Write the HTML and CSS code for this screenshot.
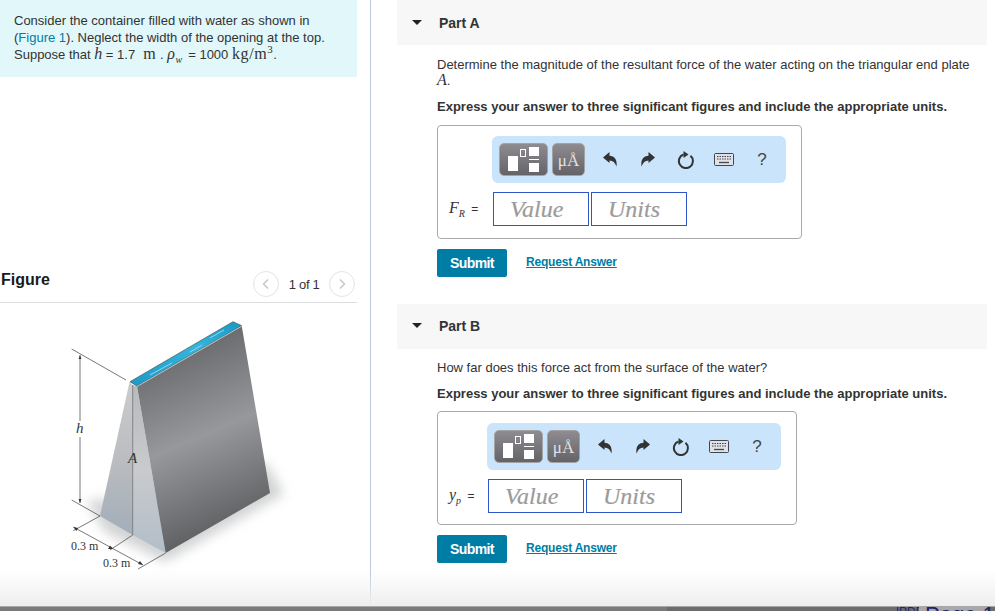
FILE: index.html
```html
<!DOCTYPE html>
<html lang="en">
<head>
    <meta charset="UTF-8">
    <meta name="viewport" content="width=device-width, initial-scale=1.0">
    <title>Part A - Water Container</title>
    <link rel="stylesheet" href="styles.css">
</head>
<body>
    <div class="page">
        <!-- Left column -->
        <aside class="left-col">
            <div class="intro">
                Consider the container filled with water as shown in
                (<a class="fig-link" href="#">Figure 1</a>). Neglect the width of the opening at the top.
                Suppose that <i class="math big">h</i> = 1.7 <span class="unit">&nbsp;m</span> . <i class="math big rho">ρ<sub>w</sub></i> = 1000 <span class="unit">kg/m<sup>3</sup></span>.
            </div>

            <div class="figure-head">
                <h2>Figure</h2>
                <div class="pager">
                    <span class="circle-btn">
                        <svg width="10" height="12" viewBox="0 0 10 12"><path d="M7 1.500 2.500 6 7 10.500" fill="none" stroke="#c4c4c4" stroke-width="1.400"/></svg>
                    </span>
                    <span class="pager-text">1 of 1</span>
                    <span class="circle-btn">
                        <svg width="10" height="12" viewBox="0 0 10 12"><path d="M3 1.500 7.500 6 3 10.500" fill="none" stroke="#c4c4c4" stroke-width="1.400"/></svg>
                    </span>
                </div>
            </div>

            <svg class="figure" width="357" height="303" viewBox="0 303 357 303">
                <defs>
                    <linearGradient id="bigFace" x1="0.3" y1="0" x2="0.55" y2="1">
                        <stop offset="0" stop-color="#5e5f61"/>
                        <stop offset="0.5" stop-color="#97989b"/>
                        <stop offset="1" stop-color="#565759"/>
                    </linearGradient>
                    <linearGradient id="leftHalf" x1="0" y1="0" x2="0" y2="1">
                        <stop offset="0" stop-color="#cbcccd"/>
                        <stop offset="0.55" stop-color="#b9bbbe"/>
                        <stop offset="1" stop-color="#a1aeba"/>
                    </linearGradient>
                    <linearGradient id="rightHalf" x1="0" y1="0" x2="0" y2="1">
                        <stop offset="0" stop-color="#b8babd"/>
                        <stop offset="0.5" stop-color="#c9cacc"/>
                        <stop offset="1" stop-color="#b2bec9"/>
                    </linearGradient>
                    <linearGradient id="water" x1="0" y1="1" x2="1" y2="0">
                        <stop offset="0" stop-color="#1a9cc8"/>
                        <stop offset="0.6" stop-color="#36b4dc"/>
                        <stop offset="1" stop-color="#159ac6"/>
                    </linearGradient>
                    <filter id="soft" x="-20%" y="-20%" width="140%" height="140%">
                        <feGaussianBlur stdDeviation="6"/>
                    </filter>
                </defs>

                <!-- ground shadow -->
                <polygon points="86,500 105,532 165,562 284,494 266,462 150,500" fill="#d2d3d4" filter="url(#soft)"/>

                <!-- container faces -->
                <polygon points="129.500,382 100,516 132.700,535 132.700,385" fill="url(#leftHalf)"/>
                <polygon points="132.700,385 132.700,535 165.700,553 137,386" fill="url(#rightHalf)"/>
                <polygon points="137,386 241.700,325.700 270,493 165.700,553" fill="url(#bigFace)"/>
                <polygon points="130,381.700 233,321.700 241.700,325.700 137,386" fill="url(#water)" stroke="#3b3d40" stroke-width="0.600"/>
                <path d="M150 375l22-12M190 352l12-7M210 338l14-8" stroke="#8fd8ef" stroke-width="1" fill="none"/>
                <line x1="137" y1="386.500" x2="241.700" y2="326.200" stroke="#d8dadb" stroke-width="0.800"/>
                <line x1="132.700" y1="385" x2="132.700" y2="535" stroke="#77797c" stroke-width="0.900"/>

                <!-- dimension lines -->
                <g class="dim">
                    <line x1="80" y1="355" x2="80" y2="421"/>
                    <line x1="80" y1="437" x2="80" y2="503"/>
                    <line x1="71.700" y1="349" x2="126" y2="380"/>
                    <line x1="71.700" y1="500" x2="100" y2="516"/>
                    <line x1="73.300" y1="530.700" x2="100" y2="516"/>
                    <line x1="73.300" y1="527" x2="143" y2="565"/>
                    <line x1="132.700" y1="535" x2="110" y2="550"/>
                    <line x1="165.700" y1="553" x2="138" y2="569"/>
                </g>
                <polygon points="80,355 78.600,359 81.400,359" fill="#333"/>
                <polygon points="80,503 78.600,499 81.400,499" fill="#333"/>
                <polygon points="73.300,527 78,528 76.400,531" fill="#333"/>
                <polygon points="113,549 108,549 110,545.500" fill="#333"/>
                <polygon points="143,565 138,564 140,561" fill="#333"/>

                <text class="fig-label italic" x="76" y="433">h</text>
                <text class="fig-label italic" x="128" y="463">A</text>
                <text class="fig-label" x="71" y="550">0.3 m</text>
                <text class="fig-label" x="103" y="567">0.3 m</text>
            </svg>
        </aside>

        <!-- Right column -->
        <main class="right-col">
            <section class="part part-a">
                <div class="part-head">
                    <span class="caret"></span>
                    <span class="part-title">Part A</span>
                </div>
                <p class="question">Determine the magnitude of the resultant force of the water acting on the triangular end plate <i class="math big">A</i>.</p>
                <p class="hint">Express your answer to three significant figures and include the appropriate units.</p>

                <div class="answer-box">
                    <div class="toolbar">
                        <span class="tool-btn frac-btn">
                            <svg width="31" height="25" viewBox="0 0 31 25">
                                <rect x="0" y="9" width="10" height="15" fill="#fff"/>
                                <rect x="12.500" y="2.500" width="5" height="7" fill="none" stroke="#fff"/>
                                <rect x="21" y="0" width="10" height="9" fill="#fff"/>
                                <rect x="21" y="12" width="10" height="1" fill="#fff"/>
                                <rect x="21" y="16" width="10" height="9" fill="#fff"/>
                            </svg>
                        </span>
                        <span class="tool-btn unit-btn">μÅ</span>
                        <span class="tool"><svg width="14" height="15" viewBox="0 0 14 15"><path d="M0 5.500 6.500 0v3.800C11 4 14.500 7 13.500 14.500 12 10.500 10 8.500 6.500 8.500V11z" fill="#333"/></svg></span>
                        <span class="tool"><svg width="14" height="15" viewBox="0 0 14 15"><path d="M14 5.500 7.500 0v3.800C3 4-.5 7 .5 14.500 2 10.500 4 8.500 7.500 8.500V11z" fill="#333"/></svg></span>
                        <span class="tool"><svg width="18" height="18" viewBox="0 0 18 18"><path d="M13.500 4.800A7 7 0 1 1 6.500 3.500" fill="none" stroke="#333" stroke-width="2"/><path d="M6.500 0v7l5-3.500z" fill="#333"/></svg></span>
                        <span class="tool"><svg width="20" height="13" viewBox="0 0 20 13"><rect x="0.500" y="0.500" width="19" height="12" rx="1" fill="#dfe3e6" stroke="#445"/><path d="M3 3.500h14M3 6h14" stroke="#445" stroke-dasharray="1.500 1"/><path d="M5 9.500h10" stroke="#445" stroke-width="1.300"/></svg></span>
                        <span class="tool help">?</span>
                    </div>
                    <div class="answer-row">
                        <span class="answer-label"><i class="math">F<sub>R</sub></i> =</span>
                        <span class="field">Value</span>
                        <span class="field">Units</span>
                    </div>
                </div>

                <div class="actions">
                    <button class="submit-btn" type="button">Submit</button>
                    <a class="request-link" href="#">Request Answer</a>
                </div>
            </section>

            <section class="part part-b">
                <div class="part-head">
                    <span class="caret"></span>
                    <span class="part-title">Part B</span>
                </div>
                <p class="question">How far does this force act from the surface of the water?</p>
                <p class="hint">Express your answer to three significant figures and include the appropriate units.</p>

                <div class="answer-box">
                    <div class="toolbar">
                        <span class="tool-btn frac-btn">
                            <svg width="31" height="25" viewBox="0 0 31 25">
                                <rect x="0" y="9" width="10" height="15" fill="#fff"/>
                                <rect x="12.500" y="2.500" width="5" height="7" fill="none" stroke="#fff"/>
                                <rect x="21" y="0" width="10" height="9" fill="#fff"/>
                                <rect x="21" y="12" width="10" height="1" fill="#fff"/>
                                <rect x="21" y="16" width="10" height="9" fill="#fff"/>
                            </svg>
                        </span>
                        <span class="tool-btn unit-btn">μÅ</span>
                        <span class="tool"><svg width="14" height="15" viewBox="0 0 14 15"><path d="M0 5.500 6.500 0v3.800C11 4 14.500 7 13.500 14.500 12 10.500 10 8.500 6.500 8.500V11z" fill="#333"/></svg></span>
                        <span class="tool"><svg width="14" height="15" viewBox="0 0 14 15"><path d="M14 5.500 7.500 0v3.800C3 4-.5 7 .5 14.500 2 10.500 4 8.500 7.500 8.500V11z" fill="#333"/></svg></span>
                        <span class="tool"><svg width="18" height="18" viewBox="0 0 18 18"><path d="M13.500 4.800A7 7 0 1 1 6.500 3.500" fill="none" stroke="#333" stroke-width="2"/><path d="M6.500 0v7l5-3.500z" fill="#333"/></svg></span>
                        <span class="tool"><svg width="20" height="13" viewBox="0 0 20 13"><rect x="0.500" y="0.500" width="19" height="12" rx="1" fill="#dfe3e6" stroke="#445"/><path d="M3 3.500h14M3 6h14" stroke="#445" stroke-dasharray="1.500 1"/><path d="M5 9.500h10" stroke="#445" stroke-width="1.300"/></svg></span>
                        <span class="tool help">?</span>
                    </div>
                    <div class="answer-row">
                        <span class="answer-label"><i class="math">y<sub>p</sub></i> =</span>
                        <span class="field">Value</span>
                        <span class="field">Units</span>
                    </div>
                </div>

                <div class="actions">
                    <button class="submit-btn" type="button">Submit</button>
                    <a class="request-link" href="#">Request Answer</a>
                </div>
            </section>
        </main>

        <div class="bottom-fade"></div>
    </div>

    <!-- Bottom strip of the window behind -->
    <footer class="bottom-bar">
        <span class="pdf-small">|PDF|</span>
        <span class="pdf-tab">Page 1 ||</span>
    </footer>
</body>
</html>
```

FILE: styles.css
```css
* {
    margin: 0;
    padding: 0;
    box-sizing: border-box;
}

html, body {
    height: 611px;
    overflow: hidden;
}

body {
    font-family: 'Liberation Sans', Arial, sans-serif;
    font-size: 13px;
    color: #333;
    background: #fff;
}

a {
    text-decoration: none;
}

.math {
    font-family: 'Liberation Serif', serif;
    font-style: italic;
    line-height: 0;
}

.math.big {
    font-size: 16px;
}

.math sub {
    font-size: 10px;
    line-height: 0;
}

.rho {
    letter-spacing: 0.5px;
    margin-right: 2px;
}

.unit {
    font-family: 'Liberation Serif', serif;
    font-size: 16px;
    letter-spacing: 0.6px;
    line-height: 0;
}

.unit sup {
    font-size: 11px;
    line-height: 0;
}

.page {
    position: relative;
    display: flex;
    height: 606px;
}

/* Left column */
.left-col {
    width: 371px;
    padding-right: 13px;
    border-right: 1px solid #b9cadc;
    flex-shrink: 0;
}

.intro {
    height: 77px;
    padding: 12px 14px 0;
    background: #e1f7fa;
    line-height: 17px;
}

.fig-link {
    color: #007da5;
}

.figure-head {
    display: flex;
    justify-content: space-between;
    align-items: flex-start;
    height: 226px;
    padding: 194px 2px 0 1px;
    border-bottom: 1px solid #ddd;
}

.figure-head h2 {
    font-size: 16px;
    line-height: 18px;
    color: #1a1a1a;
}

.pager {
    display: flex;
    align-items: center;
    gap: 9.5px;
}

.pager-text {
    letter-spacing: -0.3px;
}

.circle-btn {
    display: flex;
    justify-content: center;
    align-items: center;
    width: 26px;
    height: 26px;
    border: 1px solid #e4e4e4;
    border-radius: 50%;
}

.figure {
    display: block;
}

.dim line {
    stroke: #555;
    stroke-width: 0.8;
}

.fig-label {
    font-family: 'Liberation Serif', serif;
    font-size: 12px;
    fill: #333;
}

.fig-label.italic {
    font-style: italic;
    font-size: 15px;
}

/* Right column */
.right-col {
    flex: 1;
    padding: 0 8px 0 26px;
}

.part-head {
    display: flex;
    align-items: center;
    height: 45px;
    padding-left: 15px;
    background: #f7f7f7;
}

.caret {
    width: 0;
    height: 0;
    border-left: 5px solid transparent;
    border-right: 5px solid transparent;
    border-top: 5px solid #222;
    margin-right: 17px;
}

.part-title {
    font-size: 14px;
    font-weight: bold;
    color: #333;
}

.question {
    margin: 12px 0 0 40px;
    width: 540px;
    line-height: 16px;
}

.hint {
    margin: 10px 0 0 40px;
    font-weight: bold;
    line-height: 16px;
}

.answer-box {
    margin: 10px 0 0 40px;
    border: 1px solid #aaa;
    border-radius: 4px;
}

.toolbar {
    display: flex;
    align-items: center;
    width: 294px;
    height: 47px;
    background: #c9e4fb;
    border-radius: 6px;
}

.tool-btn {
    display: flex;
    justify-content: center;
    align-items: center;
    height: 33px;
    border-radius: 5px;
    background: linear-gradient(#8e8c90, #646367);
    border: 1px solid #a3a3a3;
    color: #fff;
}

.frac-btn {
    width: 49px;
    margin: 0 4px 0 7px;
}

.unit-btn {
    width: 33px;
    margin-right: 6px;
    padding-top: 2px;
    font-family: 'Liberation Serif', serif;
    font-size: 17px;
    color: #e2e2e2;
}

.tool {
    display: flex;
    justify-content: center;
    align-items: center;
    width: 38px;
}

.help {
    font-size: 17px;
    color: #444;
}

.answer-row {
    display: flex;
    align-items: center;
    margin-top: 9px;
}

.answer-label {
    width: 44px;
    margin-left: 11px;
    font-size: 12px;
    white-space: nowrap;
}

.answer-label .math {
    font-size: 16px;
    margin-right: 3px;
}

.field {
    width: 96px;
    height: 34px;
    margin-right: 2px;
    padding-left: 16px;
    border: 1px solid #2f55c9;
    font-family: 'Liberation Serif', serif;
    font-style: italic;
    font-size: 24px;
    line-height: 32px;
    color: #9b9b9b;
    -webkit-text-stroke: 0.2px #9b9b9b;
}

.actions {
    display: flex;
    align-items: flex-start;
    margin: 10px 0 0 40px;
}

.submit-btn {
    width: 70px;
    height: 28px;
    border: none;
    border-radius: 2px;
    background: #007da5;
    color: #fff;
    font-family: 'Liberation Sans', Arial, sans-serif;
    font-size: 14px;
    font-weight: bold;
    letter-spacing: -0.6px;
}

.request-link {
    margin: 6px 0 0 19px;
    color: #007da5;
    font-size: 12px;
    font-weight: bold;
    letter-spacing: -0.2px;
    text-decoration: underline;
}

/* Part A sizes */
.part-a .answer-box {
    width: 365px;
    height: 114px;
    padding: 10px 0 0 54px;
}

.part-a .answer-row {
    margin-left: -54px;
}

/* Part B sizes */
.part-b {
    margin-top: 27px;
}

.part-b .part-head {
    padding-bottom: 2px;
}

.part-b .question {
    margin-top: 11px;
}

.part-b .answer-box {
    width: 360px;
    height: 114px;
    margin-top: 9px;
    padding: 11px 0 0 49px;
}

.part-b .answer-row {
    margin-left: -49px;
}

.part-b .answer-label {
    width: 39px;
}

.bottom-fade {
    position: absolute;
    left: 0;
    right: 0;
    bottom: 0;
    height: 36px;
    background: linear-gradient(rgba(238, 238, 238, 0), #eeeeee);
}

/* Bottom strip */
.bottom-bar {
    position: relative;
    height: 5px;
    border-top: 1px solid #a8a8a8;
    background: linear-gradient(90deg, #7a7a7a 0, #7a7a7a 67%, #6c6c6c 67%);
    overflow: hidden;
}

.pdf-tab {
    position: absolute;
    right: 8px;
    top: 0;
    width: 68px;
    height: 5px;
    padding-left: 6px;
    background: #a9a9a9;
    font-size: 22px;
    line-height: 16px;
    white-space: nowrap;
    color: #1d2570;
}

.pdf-small {
    position: absolute;
    left: 896px;
    top: 0;
    font-size: 12px;
    line-height: 10px;
    color: #1d2570;
}
```
